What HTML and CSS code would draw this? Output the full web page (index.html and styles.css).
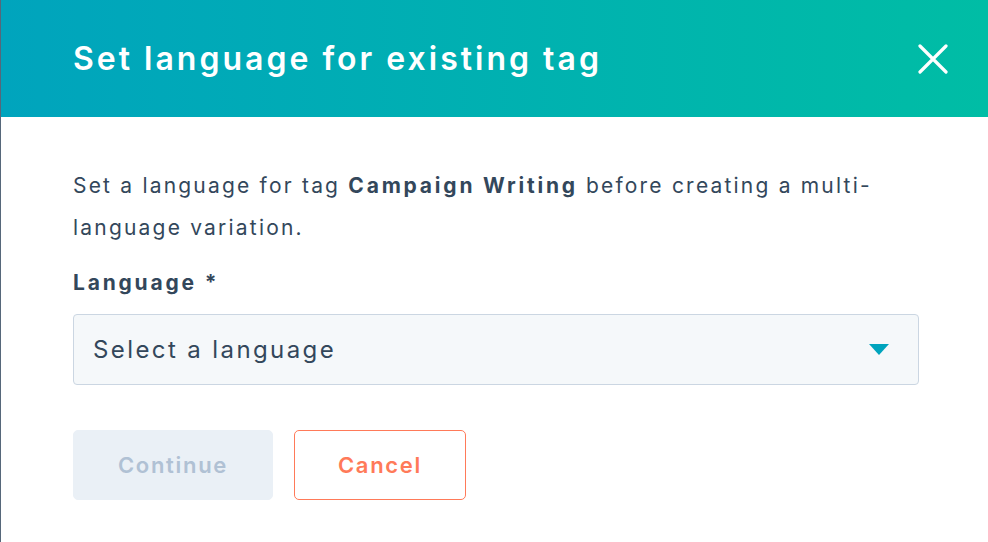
FILE: index.html
```html
<!DOCTYPE html>
<html lang="en">
<head>
<meta charset="utf-8">
<title>Set language for existing tag</title>
<link rel="stylesheet" href="styles.css">
</head>
<body>
<div class="modal">
  <header class="modal-header">
    <h1 class="modal-title">Set language for existing tag</h1>
    <button class="close-btn" aria-label="Close">
      <svg width="30" height="30" viewBox="0 0 30 30"><path d="M2 2 L28 28 M28 2 L2 28" stroke="#fff" stroke-width="3.2" stroke-linecap="round" fill="none"/></svg>
    </button>
  </header>
  <section class="modal-body">
    <p class="intro">Set a language for tag <strong>Campaign Writing</strong> before creating a multi-language variation.</p>
    <label class="field-label">Language *</label>
    <div class="select">
      <span class="select-text">Select a language</span>
      <svg class="caret" width="20" height="11" viewBox="0 0 20 11"><path d="M0 0 H20 L10 11 Z" fill="#00a4bd"/></svg>
    </div>
    <div class="actions">
      <button class="btn btn-primary" disabled>Continue</button>
      <button class="btn btn-secondary">Cancel</button>
    </div>
  </section>
</div>
</body>
</html>
```

FILE: styles.css
```css
* { box-sizing: border-box; }
html, body { margin: 0; padding: 0; background: #fff; }
body {
  font-family: Inter, "Noto Sans", sans-serif;
  color: #33475b;
}
.modal {
  width: 988px;
  height: 542px;
  border-left: 1px solid #56677a;
  display: flex;
  flex-direction: column;
}
.modal-header {
  height: 117px;
  flex: none;
  background: linear-gradient(90deg, #00a4bd 0%, #00bda5 100%);
  display: flex;
  align-items: center;
  justify-content: space-between;
  padding: 0 40px 0 72px;
}
.modal-title {
  margin: 0;
  color: #fff;
  font-size: 32px;
  font-weight: 600;
  letter-spacing: 3px;
  line-height: 40px;
}
.close-btn {
  background: none;
  border: 0;
  padding: 0;
  width: 30px;
  height: 30px;
  display: flex;
  cursor: pointer;
}
.modal-body {
  padding: 48px 69px 0 72px;
  display: flex;
  flex-direction: column;
}
.intro {
  margin: 0;
  font-size: 21px;
  line-height: 42px;
  font-weight: 400;
  letter-spacing: 2.2px;
}
.intro strong { font-weight: 700; letter-spacing: 2.8px; }
.field-label {
  margin-top: 20px;
  font-size: 21px;
  font-weight: 700;
  line-height: 28px;
  letter-spacing: 2.8px;
}
.select {
  margin-top: 17px;
  height: 71px;
  background: #f5f8fa;
  border: 1px solid #cbd6e2;
  border-radius: 4px;
  display: flex;
  align-items: center;
  justify-content: space-between;
  padding: 0 29px 0 19px;
}
.select-text {
  font-size: 24px;
  letter-spacing: 2.4px;
}
.caret { display: block; }
.actions {
  margin-top: 45px;
  display: flex;
  gap: 21px;
}
.btn {
  height: 70px;
  border-radius: 5px;
  font-family: inherit;
  font-size: 22px;
  font-weight: 600;
  letter-spacing: 1.7px;
  padding: 0;
}
.btn-primary {
  width: 200px;
  background: #eaf0f6;
  color: #b0c1d4;
  border: 1px solid #eaf0f6;
}
.btn-secondary {
  width: 172px;
  background: #fff;
  color: #ff7a59;
  border: 1px solid #ff7a59;
}
```
